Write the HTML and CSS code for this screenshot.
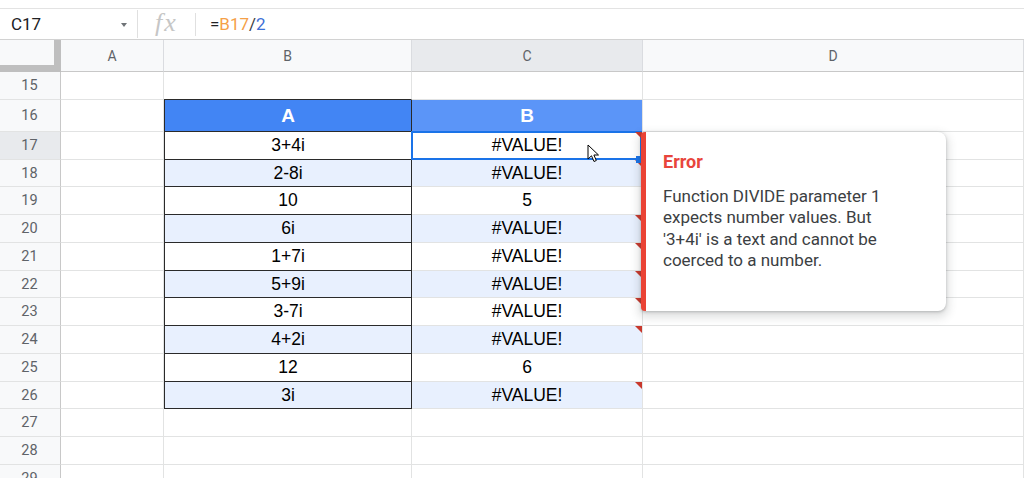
FILE: index.html
```html
<!DOCTYPE html>
<html>
<head>
<meta charset="utf-8">
<link rel="stylesheet" href="styles.css">
</head>
<body>
<div class="app">
  <div class="fbar">
    <div class="namebox"><span>C17</span><span class="caret"></span></div>
    <div class="fx">fx</div>
    <div class="formula">=<span class="f-ref">B17</span><span class="f-op">/</span><span class="f-num">2</span></div>
  </div>
  <div class="sheet">
    <div class="cell corner"></div>
    <div class="cell ch">A</div>
    <div class="cell ch">B</div>
    <div class="cell ch sel">C</div>
    <div class="cell ch">D</div>

    <div class="cell rh">15</div><div class="cell"></div><div class="cell above"></div><div class="cell"></div><div class="cell"></div>

    <div class="cell rh">16</div><div class="cell"></div><div class="cell tb th-a">A</div><div class="cell th-b">B</div><div class="cell"></div>

    <div class="cell rh sel">17</div><div class="cell"></div><div class="cell tb">3+4i</div><div class="cell err selected">#VALUE!<span class="handle"></span></div><div class="cell"></div>
    <div class="cell rh">18</div><div class="cell"></div><div class="cell tb alt">2-8i</div><div class="cell err alt">#VALUE!</div><div class="cell"></div>
    <div class="cell rh">19</div><div class="cell"></div><div class="cell tb">10</div><div class="cell">5</div><div class="cell"></div>
    <div class="cell rh">20</div><div class="cell"></div><div class="cell tb alt">6i</div><div class="cell err alt">#VALUE!</div><div class="cell"></div>
    <div class="cell rh">21</div><div class="cell"></div><div class="cell tb">1+7i</div><div class="cell err">#VALUE!</div><div class="cell"></div>
    <div class="cell rh">22</div><div class="cell"></div><div class="cell tb alt">5+9i</div><div class="cell err alt">#VALUE!</div><div class="cell"></div>
    <div class="cell rh">23</div><div class="cell"></div><div class="cell tb">3-7i</div><div class="cell err">#VALUE!</div><div class="cell"></div>
    <div class="cell rh">24</div><div class="cell"></div><div class="cell tb alt">4+2i</div><div class="cell err alt">#VALUE!</div><div class="cell"></div>
    <div class="cell rh">25</div><div class="cell"></div><div class="cell tb">12</div><div class="cell">6</div><div class="cell"></div>
    <div class="cell rh">26</div><div class="cell"></div><div class="cell tb alt">3i</div><div class="cell err alt">#VALUE!</div><div class="cell"></div>
    <div class="cell rh">27</div><div class="cell"></div><div class="cell"></div><div class="cell"></div><div class="cell"></div>
    <div class="cell rh">28</div><div class="cell"></div><div class="cell"></div><div class="cell"></div><div class="cell"></div>
    <div class="cell rh">29</div><div class="cell"></div><div class="cell"></div><div class="cell"></div><div class="cell"></div>
  </div>

  <div class="tooltip">
    <div class="tt-title">Error</div>
    <div class="tt-body">Function DIVIDE parameter 1<br>expects number values. But<br>'3+4i' is a text and cannot be<br>coerced to a number.</div>
  </div>

  <svg class="cursor" width="14" height="20" viewBox="0 0 14 20">
    <path d="M1 1 L1 15 L4.5 11.8 L7 17.5 L9.3 16.5 L6.9 11 L11.5 11 Z" fill="#fff" stroke="#000" stroke-width="1" stroke-linejoin="round"/>
  </svg>
</div>
</body>
</html>
```

FILE: styles.css
```css
html, body {
  margin: 0;
  padding: 0;
  background: #fff;
  overflow: hidden;
}

.app {
  position: relative;
  width: 1024px;
  height: 478px;
  padding-top: 8px;
  box-sizing: border-box;
  overflow: hidden;
  font-family: Roboto, "Liberation Sans", sans-serif;
}

/* formula bar */
.fbar {
  display: flex;
  align-items: center;
  height: 32px;
  box-sizing: border-box;
  border-top: 1px solid #e3e3e3;
  border-bottom: 1px solid #d2d2d2;
}

.namebox {
  width: 138px;
  height: 28px;
  box-sizing: border-box;
  padding: 0 10px 0 11px;
  display: flex;
  align-items: center;
  justify-content: space-between;
  font-size: 17px;
  color: #202124;
  border-right: 1px solid #e0e0e0;
}

.caret {
  width: 0;
  height: 0;
  border-left: 3.5px solid transparent;
  border-right: 3.5px solid transparent;
  border-top: 4px solid #6f7377;
  margin-top: 2px;
}

.fx {
  width: 58px;
  height: 23px;
  box-sizing: border-box;
  display: flex;
  align-items: center;
  justify-content: center;
  font-family: "Liberation Serif", "DejaVu Serif", serif;
  font-style: italic;
  font-size: 26px;
  letter-spacing: 2px;
  color: #c6c6c6;
  border-right: 1px solid #e0e0e0;
  padding-bottom: 3px;
}

.formula {
  padding-left: 14px;
  font-size: 17px;
  color: #202124;
}

.f-ref { color: #f5a047; }
.f-op { color: #3c4043; }
.f-num { color: #3d70d6; }

/* grid */
.sheet {
  display: grid;
  grid-template-columns: 61px 103px 248px 231px 1fr;
  grid-template-rows: 32px 28px 32px 28px 27px 28px 28px 28px 27px 28px 28px 28px 27px 28px 28px 28px;
}

.cell {
  position: relative;
  box-sizing: border-box;
  border-right: 1px solid #e2e3e3;
  border-bottom: 1px solid #e2e3e3;
  display: flex;
  align-items: center;
  justify-content: center;
  font-family: "Liberation Sans", Arial, sans-serif;
  font-size: 17.5px;
  color: #000;
  background: #fff;
}

.cell.corner {
  background: #f8f9fa;
  border-right: 7px solid #bfbfbf;
  border-bottom: 7px solid #bfbfbf;
}

.cell.ch {
  background: #f8f9fa;
  font-family: Roboto, "Liberation Sans", sans-serif;
  font-size: 14px;
  color: #5f6368;
  border-right-color: #dadce0;
  border-bottom-color: #c8c8c8;
}

.cell.rh {
  background: #f8f9fa;
  font-family: Roboto, "Liberation Sans", sans-serif;
  font-size: 14.5px;
  color: #5f6368;
  border-right-color: #c8c8c8;
  border-bottom-color: #e2e3e3;
  padding-right: 1px;
}

.cell.ch.sel,
.cell.rh.sel {
  background: #e8eaed;
}

.cell.above {
  border-bottom-color: #2a2a2a;
}

.cell.tb {
  border-left: 1px solid #2a2a2a;
  border-right-color: #2a2a2a;
  border-bottom-color: #2a2a2a;
}

.cell.th-a,
.cell.th-b {
  color: #fff;
  font-weight: 700;
  font-size: 19px;
}

.cell.th-a { background: #4285f4; }
.cell.th-b { background: #5b95f8; }

.cell.alt { background: #e8f0fe; }

/* error marker in the top-right corner */
.cell.err::before {
  content: "";
  position: absolute;
  top: 0;
  right: 0;
  width: 0;
  height: 0;
  border-top: 7px solid #c8382c;
  border-left: 7px solid transparent;
  z-index: 2;
}

/* selection frame */
.cell.selected {
  z-index: 3;
}

.cell.selected::after {
  content: "";
  position: absolute;
  top: -1px;
  left: -1px;
  right: 0;
  bottom: -1px;
  border: 2px solid #1a73e8;
  box-sizing: border-box;
  z-index: 1;
}

.handle {
  position: absolute;
  right: 0;
  bottom: -4px;
  width: 6px;
  height: 7px;
  background: #1a73e8;
  z-index: 3;
}

/* error tooltip */
.tooltip {
  position: absolute;
  left: 641px;
  top: 132px;
  width: 305px;
  height: 179px;
  box-sizing: border-box;
  background: #fff;
  border-left: 5px solid #ea4335;
  border-radius: 4px 8px 8px 4px;
  box-shadow: 0 1px 3px rgba(60, 64, 67, 0.3), 0 4px 8px 3px rgba(60, 64, 67, 0.15);
  padding: 18px 16px 0 17px;
  z-index: 5;
}

.tt-title {
  font-weight: 700;
  font-size: 18px;
  line-height: 24px;
  color: #e8453c;
}

.tt-body {
  margin-top: 12px;
  font-size: 17px;
  line-height: 21.3px;
  color: #3c4043;
  white-space: nowrap;
}

.cursor {
  position: absolute;
  left: 587px;
  top: 144px;
  z-index: 6;
}
```
